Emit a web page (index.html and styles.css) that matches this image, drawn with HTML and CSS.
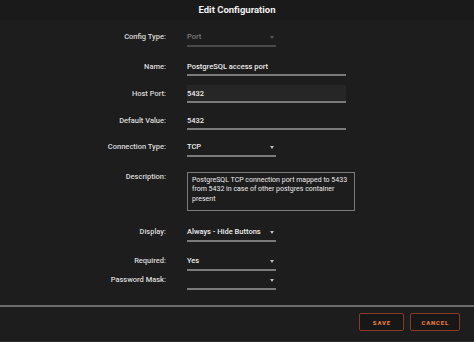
FILE: index.html
```html
<!DOCTYPE html>
<html lang="en">
<head>
<meta charset="UTF-8">
<title>Edit Configuration</title>
<link rel="stylesheet" href="styles.css">
</head>
<body>

<div class="topo">Edit Configuration</div>

<div class="form">
  <div class="linha l-config">
    <label>Config Type:</label>
    <div class="campo select curto desativado">Port<span class="seta"></span></div>
  </div>
  <div class="linha l-nome">
    <label>Name:</label>
    <div class="campo">PostgreSQL access port</div>
  </div>
  <div class="linha l-host">
    <label>Host Port:</label>
    <div class="campo foco">5432</div>
  </div>
  <div class="linha l-default">
    <label>Default Value:</label>
    <div class="campo">5432</div>
  </div>
  <div class="linha l-conexao">
    <label>Connection Type:</label>
    <div class="campo select curto">TCP<span class="seta"></span></div>
  </div>
  <div class="linha l-desc">
    <label>Description:</label>
    <div class="texto">PostgreSQL TCP connection port mapped to 5433<br>from 5432 in case of other postgres container<br>present</div>
  </div>
  <div class="linha l-display">
    <label>Display:</label>
    <div class="campo select curto">Always - Hide Buttons<span class="seta"></span></div>
  </div>
  <div class="linha l-required">
    <label>Required:</label>
    <div class="campo select curto">Yes<span class="seta"></span></div>
  </div>
  <div class="linha l-senha">
    <label>Password Mask:</label>
    <div class="campo select curto"><span class="seta"></span></div>
  </div>
</div>

<div class="rodape">
  <button class="botao">SAVE</button>
  <button class="botao">CANCEL</button>
</div>

</body>
</html>
```

FILE: styles.css
```css
body {
  margin: 0;
  height: 342px;
  overflow: hidden;
  background: #1d1d1d;
  font-family: Roboto, "Liberation Sans", sans-serif;
  color: #ececec;
  display: flex;
  flex-direction: column;
}

.topo {
  height: 20px;
  line-height: 19px;
  background: #1a1a1a;
  text-align: center;
  font-size: 9.5px;
  font-weight: bold;
  color: #f0f0f0;
}

.form {
  flex: 1;
}

.linha {
  display: flex;
  align-items: flex-start;
}

.linha label {
  width: 166px;
  text-align: right;
  font-size: 7.5px;
  font-weight: 500;
  line-height: 14px;
  color: #dadada;
  margin-right: 21px;
}

.campo {
  position: relative;
  width: 159px;
  height: 14px;
  line-height: 14px;
  font-size: 7.5px;
  font-weight: 500;
  border-bottom: 2px solid #7a7a7a;
  white-space: nowrap;
}

.campo.select {
  height: 15px;
  line-height: 14px;
}

.campo.curto {
  width: 89px;
}

.campo.foco {
  background: #262626;
  padding-top: 2px;
}

.l-host label {
  padding-top: 2px;
}

.desativado {
  color: #7a7a7a;
  border-bottom-color: #4a4a4a;
}

.seta {
  position: absolute;
  right: 2px;
  top: 6px;
  border-left: 2px solid transparent;
  border-right: 2px solid transparent;
  border-top: 3px solid #bdbdbd;
}

.desativado .seta {
  border-top-color: #555;
}

.texto {
  width: 158px;
  height: 31px;
  border: 1px solid #7a7a7a;
  padding: 3px 4px 3px;
  font-size: 7px;
  line-height: 9.3px;
  white-space: nowrap;
  overflow: hidden;
}

.l-desc label {
  line-height: 9px;
  padding-top: 0;
}

/* distancias entre as linhas */
.l-config { margin-top: 10px; }
.l-nome { margin-top: 13px; }
.l-host { margin-top: 9px; }
.l-default { margin-top: 11px; }
.l-conexao { margin-top: 10px; }
.l-desc { margin-top: 15px; }
.l-display { margin-top: 14px; }
.l-required { margin-top: 12px; }
.l-senha { margin-top: 2px; }

.rodape {
  border-top: 2px solid #6b6b6b;
  height: 37px;
  display: flex;
  justify-content: flex-end;
  align-items: flex-start;
  gap: 6px;
  padding: 6px 14px 0 0;
  box-sizing: border-box;
  border-bottom: 1px solid #2c2c2c;
}

.botao {
  height: 18px;
  padding: 0 10px;
  min-width: 45px;
  background: #171717;
  border: 1.5px solid #8a3828;
  border-radius: 2px;
  color: #e07a3a;
  font-family: Roboto, sans-serif;
  font-size: 6px;
  font-weight: 900;
  letter-spacing: 0.8px;
  cursor: pointer;
}
```
